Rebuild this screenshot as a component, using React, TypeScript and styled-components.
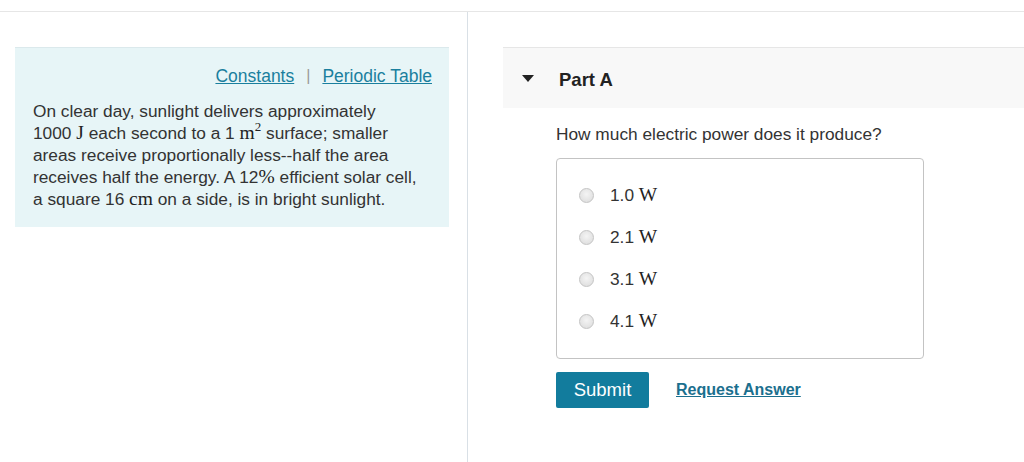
import styled, { createGlobalStyle } from "styled-components";

const GlobalStyle = createGlobalStyle`
    html, body {
        margin: 0;
        padding: 0;
        background: #fff;
    }
    body {
        font-family: "Liberation Sans", Arial, sans-serif;
        color: #333;
    }
`;

const options = ["1.0", "2.1", "3.1", "4.1"];

export default function App() {
    return (
        <>
            <GlobalStyle />
            <Styled.Page>
                <Styled.LeftColumn>
                    <Styled.InfoBox>
                        <Styled.LinkRow>
                            <Styled.Link href="#">Constants</Styled.Link>
                            <Styled.Separator>|</Styled.Separator>
                            <Styled.Link href="#">Periodic Table</Styled.Link>
                        </Styled.LinkRow>
                        <Styled.Problem>
                            On clear day, sunlight delivers approximately{" "}
                            <Quantity>
                                1000 <MathText>J</MathText>
                            </Quantity>{" "}
                            each second to a{" "}
                            <Quantity>
                                1 <MathText>
                                    m<sup>2</sup>
                                </MathText>
                            </Quantity>{" "}
                            surface; smaller areas receive proportionally less--half the area receives
                            half the energy. A{" "}
                            <Quantity>
                                12<MathText>%</MathText>
                            </Quantity>{" "}
                            efficient solar cell, a square{" "}
                            <Quantity>
                                16 <MathText>cm</MathText>
                            </Quantity>{" "}
                            on a side, is in bright sunlight.
                        </Styled.Problem>
                    </Styled.InfoBox>
                </Styled.LeftColumn>
                <Styled.RightColumn>
                    <Styled.PartHeader>
                        <Triangle />
                        <Styled.PartTitle>Part A</Styled.PartTitle>
                    </Styled.PartHeader>
                    <Styled.PartBody>
                        <Styled.Question>How much electric power does it produce?</Styled.Question>
                        <Styled.OptionsBox>
                            {options.map((value) => (
                                <Styled.Option key={value}>
                                    <Radio />
                                    <Styled.OptionLabel>
                                        {value} <MathText>W</MathText>
                                    </Styled.OptionLabel>
                                </Styled.Option>
                            ))}
                        </Styled.OptionsBox>
                        <Styled.Actions>
                            <SubmitButton>Submit</SubmitButton>
                            <RequestLink href="#">Request Answer</RequestLink>
                        </Styled.Actions>
                    </Styled.PartBody>
                </Styled.RightColumn>
            </Styled.Page>
        </>
    );
}

const Styled = {
    Page: styled.div`
        display: flex;
        margin-top: 11px;
        border-top: 1px solid #e6e6e6;
        height: 450px;
    `,
    LeftColumn: styled.div`
        width: 468px;
        flex-shrink: 0;
        padding: 35px 18px 0 15px;
        box-sizing: border-box;
        border-right: 1px solid #d9e0e6;
    `,
    InfoBox: styled.div`
        background: #e7f5f7;
        border-top: 1px solid #dbe9ec;
        padding: 17px 21px 17px 18px;
        height: 180px;
        box-sizing: border-box;
    `,
    LinkRow: styled.div`
        display: flex;
        justify-content: flex-end;
        align-items: center;
        gap: 12px;
        font-size: 17.5px;
        line-height: 22px;
        margin-bottom: 13px;
        margin-right: -4px;
    `,
    Link: styled.a`
        color: #1a7f9e;
        text-decoration: underline;
    `,
    Separator: styled.span`
        color: #999;
        font-size: 16px;
    `,
    Problem: styled.p`
        margin: 0;
        font-size: 17.3px;
        line-height: 22px;
        color: #333;
    `,
    RightColumn: styled.div`
        flex: 1;
        padding-top: 35px;
        padding-left: 35px;
    `,
    PartHeader: styled.div`
        display: flex;
        align-items: center;
        height: 61px;
        box-sizing: border-box;
        background: #f8f8f8;
        border-top: 1px solid #e6e6e6;
        padding-left: 19px;
        gap: 25px;
    `,
    PartTitle: styled.h2`
        margin: 0;
        font-size: 18.5px;
        font-weight: bold;
        color: #222;
        padding-top: 3px;
    `,
    PartBody: styled.div`
        padding-left: 53px;
        padding-top: 14px;
    `,
    Question: styled.p`
        margin: 0 0 12px;
        font-size: 17.3px;
        line-height: 24px;
    `,
    OptionsBox: styled.div`
        width: 368px;
        height: 201px;
        box-sizing: border-box;
        border: 1px solid #c3c3c3;
        border-radius: 4px;
        padding: 25px 0 0 22px;
        display: flex;
        flex-direction: column;
        gap: 20px;
    `,
    Option: styled.label`
        display: flex;
        align-items: center;
        height: 22px;
        gap: 16px;
    `,
    OptionLabel: styled.span`
        font-size: 17.3px;
        color: #333;
    `,
    Actions: styled.div`
        display: flex;
        align-items: center;
        gap: 27px;
        margin-top: 13px;
    `,
};

const Quantity = styled.span`
    white-space: nowrap;
`;

const MathText = styled.span`
    font-family: "Liberation Serif", "Times New Roman", serif;
    font-size: 19.5px;
    color: #222;

    & sup {
        font-size: 13px;
        line-height: 0;
        vertical-align: 8px;
    }
`;

const Radio = styled.span`
    width: 15px;
    height: 15px;
    border-radius: 50%;
    border: 1px solid #c4c4c4;
    background: radial-gradient(circle at 50% 40%, #f4f4f4 0%, #dadada 100%);
    box-sizing: border-box;
    flex-shrink: 0;
`;

const Triangle = styled.span`
    width: 0;
    height: 0;
    border-left: 6px solid transparent;
    border-right: 6px solid transparent;
    border-top: 7px solid #222;
`;

const SubmitButton = styled.button`
    width: 93px;
    height: 36px;
    border: none;
    border-radius: 2px;
    background: #127c9d;
    color: #fff;
    font-family: "Liberation Sans", Arial, sans-serif;
    font-size: 18.5px;
    cursor: pointer;
`;

const RequestLink = styled.a`
    color: #1b6f8e;
    font-weight: bold;
    font-size: 16px;
    text-decoration: underline;
`;
